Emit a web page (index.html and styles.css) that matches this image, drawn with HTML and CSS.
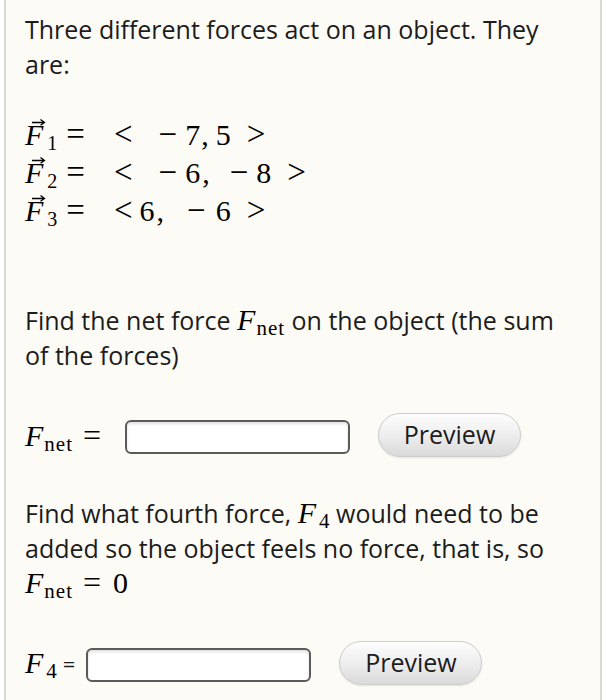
FILE: index.html
```html
<!DOCTYPE html>
<html>
<head>
<meta charset="utf-8">
<link rel="stylesheet" href="styles.css">
</head>
<body>
<div class="panel">
  <p class="text">Three different forces act on an object. They are:</p>

  <div class="math-block">
    <div class="mrow">
      <span class="vec"><i>F</i><svg class="arrow" viewBox="0 0 15 8" width="15" height="8"><path d="M1 4.5 H13 M9.5 1.5 L13.5 4.5 L9.5 7.3" fill="none" stroke="#000" stroke-width="1.3"/></svg></span>
      <span class="s">1</span>
      <span class="o eq">=</span>
      <span class="o g29">&lt;</span>
      <span class="o g26">−</span><span class="g8">7</span><span class="g1">,</span><span class="g7">5</span>
      <span class="o g16">&gt;</span>
    </div>
    <div class="mrow">
      <span class="vec"><i>F</i><svg class="arrow" viewBox="0 0 15 8" width="15" height="8"><path d="M1 4.5 H13 M9.5 1.5 L13.5 4.5 L9.5 7.3" fill="none" stroke="#000" stroke-width="1.3"/></svg></span>
      <span class="s">2</span>
      <span class="o eq">=</span>
      <span class="o g29">&lt;</span>
      <span class="o g26">−</span><span class="g8">6</span><span class="g2">,</span><span class="o g20">−</span><span class="g8">8</span>
      <span class="o g16">&gt;</span>
    </div>
    <div class="mrow">
      <span class="vec"><i>F</i><svg class="arrow" viewBox="0 0 15 8" width="15" height="8"><path d="M1 4.5 H13 M9.5 1.5 L13.5 4.5 L9.5 7.3" fill="none" stroke="#000" stroke-width="1.3"/></svg></span>
      <span class="s">3</span>
      <span class="o eq">=</span>
      <span class="o g29">&lt;</span>
      <span class="g7">6</span><span class="g2">,</span><span class="o g23">−</span><span class="g10">6</span>
      <span class="o g16">&gt;</span>
    </div>
  </div>

  <p class="text net-intro">Find the net force <span class="m"><i>F</i><sub>net</sub></span> on the object (the sum of the forces)</p>

  <div class="answer-row">
    <span class="m label"><i>F</i><sub>net</sub><span class="op">=</span></span>
    <input class="answer fnet-input" type="text">
    <button class="preview">Preview</button>
  </div>

  <p class="text">Find what fourth force, <span class="m"><i>F</i><sub class="num">4</sub></span> would need to be added so the object feels no force, that is, so <span class="m"><i>F</i><sub>net</sub><span class="op">=</span>0</span></p>

  <div class="answer-row">
    <span class="m label"><i>F</i><sub class="num">4</sub></span><span class="plain-eq">=</span>
    <input class="answer" type="text">
    <button class="preview">Preview</button>
  </div>
</div>
</body>
</html>
```

FILE: styles.css
```css
html, body {
  margin: 0;
  padding: 0;
  background: #ffffff;
}

.panel {
  margin-left: 4px;
  width: 598px;
  min-height: 760px;
  box-sizing: border-box;
  background: #fdfbf6;
  border-left: 2px solid #d9d8d5;
  border-right: 2px solid #d9d8d5;
  padding: 12px 30px 0 19px;
  font-family: "Open Sans", "Noto Sans", sans-serif;
  font-size: 25px;
  line-height: 35px;
  color: #1c1c1c;
}

.text {
  margin: 0;
}

/* display math block */
.math-block {
  margin-top: 33px;
  font-family: "Liberation Serif", "DejaVu Serif", serif;
  font-size: 30px;
  line-height: 38px;
  color: #000;
}

.mrow {
  display: flex;
  align-items: baseline;
  white-space: nowrap;
  height: 38px;
}

.vec {
  position: relative;
  display: inline-block;
  font-size: 30px;
}

.vec i {
  font-style: italic;
}

.arrow {
  position: absolute;
  left: 6px;
  top: 2px;
}

.mrow .s {
  font-size: 20px;
  position: relative;
  top: 5px;
  margin-left: 4px;
}

.mrow .o {
  font-size: 33px;
}

.mrow .eq {
  margin-left: 9px;
}

.g1 { margin-left: 1px; }
.g2 { margin-left: 2px; }
.g7 { margin-left: 7px; }
.g8 { margin-left: 8px; }
.g10 { margin-left: 10px; }
.g16 { margin-left: 16px; }
.g20 { margin-left: 20px; }
.g23 { margin-left: 23px; }
.g26 { margin-left: 26px; }
.g29 { margin-left: 29px; }

.net-intro {
  margin-top: 74px;
}

/* inline math */
.m {
  font-family: "Liberation Serif", "DejaVu Serif", serif;
  font-size: 30px;
  line-height: 1;
  color: #000;
}

.m i {
  font-style: italic;
}

.m sub {
  font-size: 21px;
  letter-spacing: 1px;
  vertical-align: -5px;
  line-height: 0;
  margin-left: 1px;
}

.m sub.num {
  letter-spacing: 0;
  margin-left: 3px;
}

.m .op {
  font-size: 32px;
  margin: 0 12px 0 10px;
}

/* answer rows */
.answer-row {
  display: flex;
  align-items: center;
  height: 44px;
  margin: 40px 0 39px;
}

.label {
  white-space: nowrap;
}

.plain-eq {
  font-size: 22px;
  margin: 0 11px 0 6px;
  color: #1c1c1c;
}

.answer {
  box-sizing: border-box;
  height: 34px;
  width: 225px;
  border: 2px solid #5b5b5b;
  border-radius: 6px;
  background: #fff;
  box-shadow: inset 0 2px 3px rgba(0, 0, 0, 0.12);
  outline: none;
  padding: 0 6px;
  margin-top: 4px;
}

.fnet-input {
  margin-left: 12px;
}

.preview {
  box-sizing: border-box;
  margin-left: 28px;
  height: 44px;
  width: 143px;
  border-radius: 22px;
  border: 1px solid #cdcdcd;
  background: linear-gradient(#fdfdfd, #ececec 55%, #dadada);
  font-family: "Open Sans", "Noto Sans", sans-serif;
  font-size: 25px;
  color: #1c1c1c;
  padding: 0 0 2px;
  box-shadow: 0 1px 2px rgba(0, 0, 0, 0.1);
}
```
